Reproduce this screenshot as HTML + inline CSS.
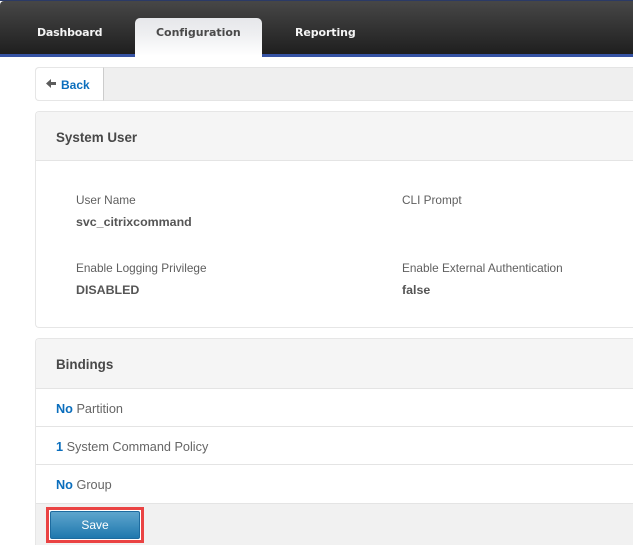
<!DOCTYPE html>
<html><head><meta charset="utf-8"><style>
html,body{margin:0;padding:0}
body{width:633px;height:545px;overflow:hidden;background:#fff;position:relative;font-family:"Liberation Sans",sans-serif;color:#5a5a5a}
div,span{position:absolute;box-sizing:border-box}
.t{white-space:nowrap;line-height:16px}
.nav{font:bold 11px/14px "DejaVu Sans",sans-serif;letter-spacing:-.02px;color:#f4f4f4;white-space:nowrap}
.lab{font-size:11.800px;color:#5f5f5f}
.val{font-size:12.400px;font-weight:bold;color:#555}
.h{font-size:13.400px;font-weight:bold;color:#484848}
.row{font-size:12.700px;color:#666}
b{color:#0a6ebd}
.line{left:36px;width:597px;height:1px;background:#e4e4e4}
</style></head><body>
<div style="left:0;top:0;width:633px;height:1px;background:#2b3a66"></div>
<div style="left:0;top:1px;width:633px;height:53px;background:linear-gradient(#474747,#1f1f1f);border-radius:4px 0 0 0"></div>
<div style="left:0;top:54px;width:633px;height:3px;background:#3653a4"></div>
<div style="left:135px;top:18px;width:127px;height:40px;border-radius:5px 5px 0 0;background:linear-gradient(#e6e7ea 0,#eeeff1 40%,#fff 95%)"></div>
<div class="nav" style="left:37px;top:26px;letter-spacing:-.2px">Dashboard</div>
<div class="nav" style="left:156px;top:26px;color:#4a4a4a">Configuration</div>
<div class="nav" style="left:295px;top:26px;letter-spacing:-.1px">Reporting</div>

<div style="left:35px;top:67px;width:598px;height:34px;background:#efefef;border:1px solid #e4e4e4;border-right:0;border-radius:4px 0 0 4px"></div>
<div style="left:35px;top:67px;width:69px;height:34px;background:#fff;border:1px solid #e6e6e6;border-right:1px solid #ccc;border-radius:4px 0 0 4px"></div>
<svg style="position:absolute;left:46px;top:79px" width="11" height="10" viewBox="0 0 11 10"><path d="M0 4.500L5 0V3H10V6H5V9Z" fill="#5c5c5c"/></svg>
<div class="t" style="left:61px;top:77px;font-size:12px;font-weight:bold;color:#0a6ebd">Back</div>

<div style="left:35px;top:111px;width:598px;height:217px;background:#fff;border:1px solid #e6e6e6;border-right:0;border-radius:4px 0 0 4px"></div>
<div style="left:36px;top:112px;width:597px;height:48px;background:#f5f5f5;border-radius:4px 0 0 0"></div>
<div class="line" style="top:160px"></div>
<div class="t h" style="left:56px;top:130px">System User</div>
<div class="t lab" style="left:76px;top:192px">User Name</div>
<div class="t val" style="left:76px;top:214px">svc_citrixcommand</div>
<div class="t lab" style="left:402px;top:192px">CLI Prompt</div>
<div class="t lab" style="left:76px;top:260px">Enable Logging Privilege</div>
<div class="t val" style="left:76px;top:282px">DISABLED</div>
<div class="t lab" style="left:402px;top:260px">Enable External Authentication</div>
<div class="t val" style="left:402px;top:282px">false</div>

<div style="left:35px;top:338px;width:598px;height:207px;background:#fff;border:1px solid #e6e6e6;border-right:0;border-bottom:0;border-radius:4px 0 0 0"></div>
<div style="left:36px;top:339px;width:597px;height:49px;background:#f5f5f5;border-radius:4px 0 0 0"></div>
<div class="line" style="top:388px"></div>
<div class="t h" style="left:56px;top:357px">Bindings</div>
<div class="t row" style="left:56px;top:401px"><b>No</b> Partition</div>
<div class="line" style="top:426px"></div>
<div class="t row" style="left:56px;top:439px"><b>1</b> System Command Policy</div>
<div class="line" style="top:464px"></div>
<div class="t row" style="left:56px;top:477px"><b>No</b> Group</div>
<div class="line" style="top:503px"></div>
<div style="left:36px;top:504px;width:597px;height:41px;background:#f1f1f1"></div>
<div style="left:46px;top:507px;width:98px;height:36px;border:3px solid #ea4343;background:#fff"></div>
<div style="left:50px;top:511px;width:90px;height:28px;border:1px solid #1d6b9f;border-radius:2px;background:linear-gradient(#5ea5cd,#1f78ae)"></div>
<div class="t" style="left:50px;top:517px;width:90px;text-align:center;font-size:12px;color:#fff">Save</div>
</body></html>
